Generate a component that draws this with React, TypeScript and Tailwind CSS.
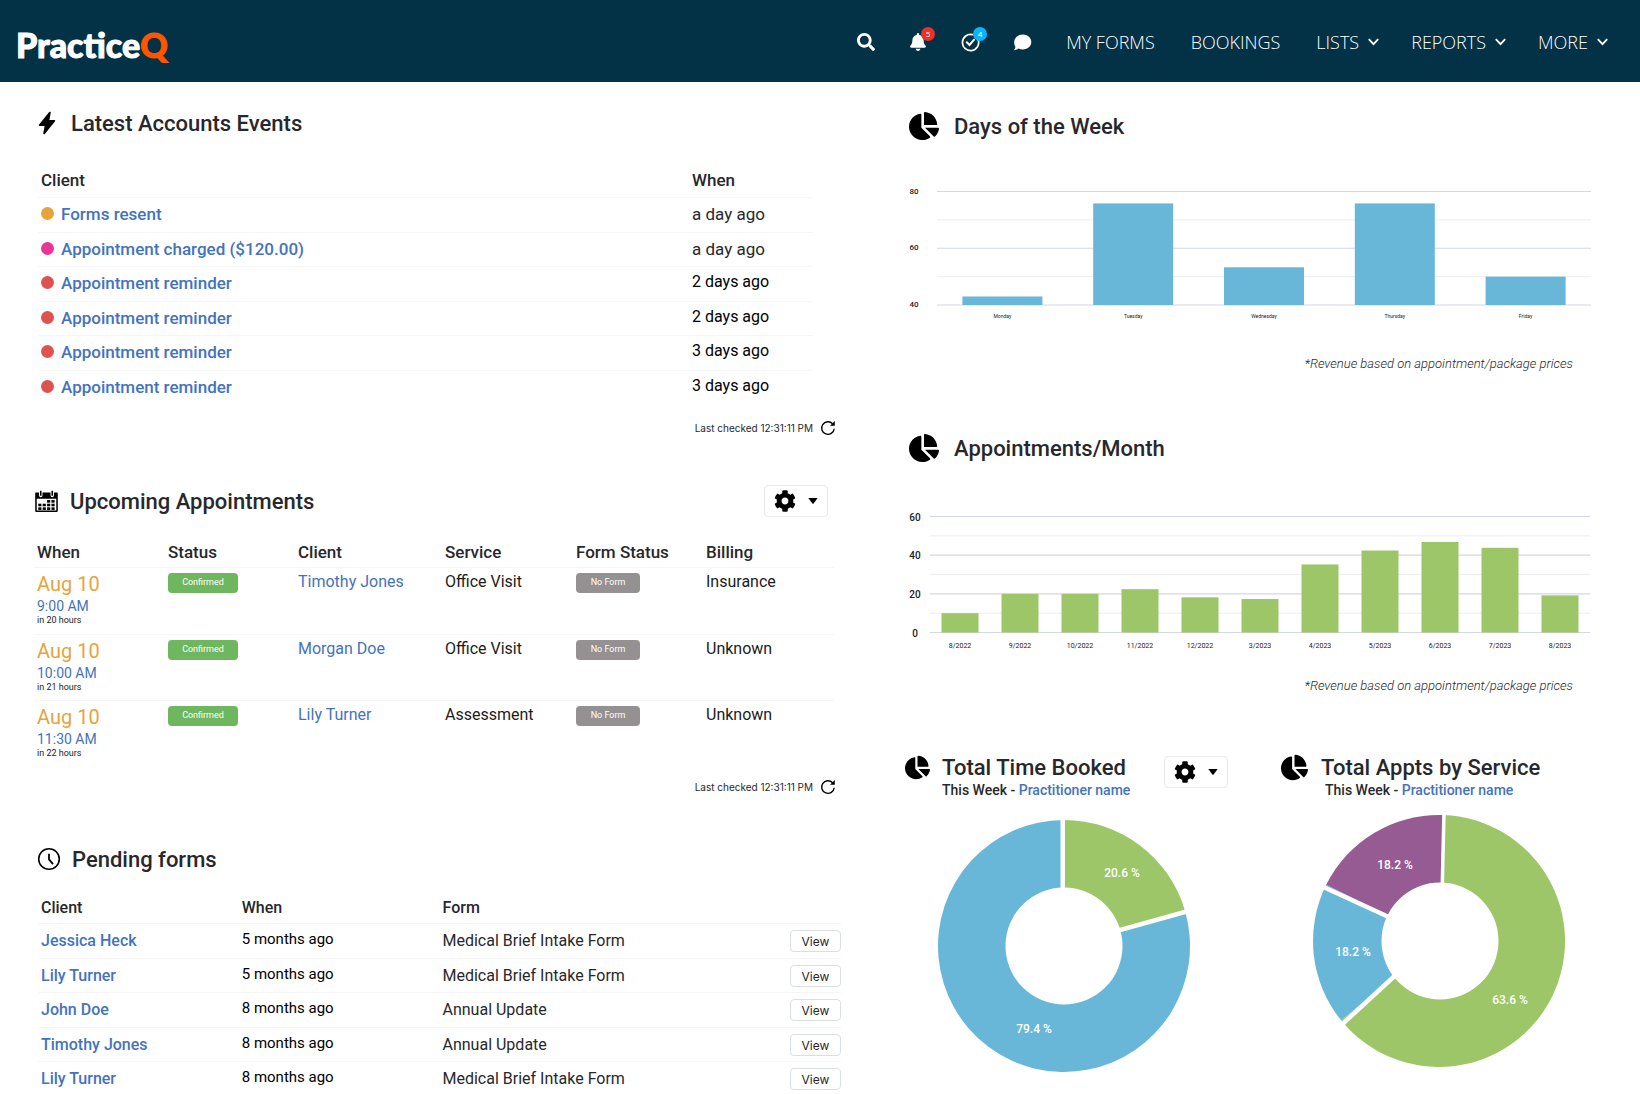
import type { ReactNode } from 'react'
import { FaBell, FaChartPie, FaCog, FaSearch } from 'react-icons/fa'
import { IoFlash } from 'react-icons/io5'

const BLUE = '#69b7d8'
const GREEN = '#9dc668'
const PURPLE = '#955b92'

const EVENTS = [
  { dot: 'bg-[#e8a33c]', label: 'Forms resent', when: 'a day ago' },
  { dot: 'bg-[#ea3499]', label: 'Appointment charged ($120.00)', when: 'a day ago' },
  { dot: 'bg-[#e0524f]', label: 'Appointment reminder', when: '2 days ago' },
  { dot: 'bg-[#e0524f]', label: 'Appointment reminder', when: '2 days ago' },
  { dot: 'bg-[#e0524f]', label: 'Appointment reminder', when: '3 days ago' },
  { dot: 'bg-[#e0524f]', label: 'Appointment reminder', when: '3 days ago' },
]

const APPOINTMENTS = [
  { date: 'Aug 10', time: '9:00 AM', eta: 'in 20 hours', client: 'Timothy Jones', service: 'Office Visit', billing: 'Insurance' },
  { date: 'Aug 10', time: '10:00 AM', eta: 'in 21 hours', client: 'Morgan Doe', service: 'Office Visit', billing: 'Unknown' },
  { date: 'Aug 10', time: '11:30 AM', eta: 'in 22 hours', client: 'Lily Turner', service: 'Assessment', billing: 'Unknown' },
]

const PENDING = [
  { client: 'Jessica Heck', when: '5 months ago', form: 'Medical Brief Intake Form' },
  { client: 'Lily Turner', when: '5 months ago', form: 'Medical Brief Intake Form' },
  { client: 'John Doe', when: '8 months ago', form: 'Annual Update' },
  { client: 'Timothy Jones', when: '8 months ago', form: 'Annual Update' },
  { client: 'Lily Turner', when: '8 months ago', form: 'Medical Brief Intake Form' },
]

const DAYS = [
  { label: 'Monday', value: 43 },
  { label: 'Tuesday', value: 75.8 },
  { label: 'Wednesday', value: 53.3 },
  { label: 'Thursday', value: 75.8 },
  { label: 'Friday', value: 50 },
]

const MONTHS = [
  { label: '8/2022', value: 10 },
  { label: '9/2022', value: 20 },
  { label: '10/2022', value: 20 },
  { label: '11/2022', value: 22.4 },
  { label: '12/2022', value: 18.2 },
  { label: '3/2023', value: 17.3 },
  { label: '4/2023', value: 35.2 },
  { label: '5/2023', value: 42.4 },
  { label: '6/2023', value: 46.8 },
  { label: '7/2023', value: 43.8 },
  { label: '8/2023', value: 19.2 },
]

//// icons
const Chevron = () => (
  <svg width="11" height="8" viewBox="0 0 11 8" fill="none" stroke="white" strokeWidth="1.8">
    <path d="M.8 1.2 5.5 6.2 10.2 1.2" />
  </svg>
)

const CheckIcon = () => (
  <svg width="19" height="19" viewBox="0 0 19 19" fill="none" stroke="white" strokeWidth="1.7" strokeLinecap="round">
    <path d="M17.3 7.2A8.100 8.100 0 1 1 11.500 1.700" />
    <path d="m5.800 9.300 2.700 2.700 4.600-5.300" strokeWidth="2" />
  </svg>
)

const ChatIcon = () => (
  <svg width="19" height="17" viewBox="0 0 19 17" fill="white">
    <path d="M9.8 0.5C14.6 0.5 18.3 3.8 18.3 8s-3.7 7.4-8.5 7.4c-1.5 0-2.900-.3-4.100-.9C4.500 15.500 2.700 16.100.7 16.200c1-1 1.600-2.200 1.700-3.500A7.100 7.100 0 0 1 1.200 8C1.200 3.800 5 .5 9.800.5Z" />
  </svg>
)

const CalendarIcon = () => (
  <svg width="23" height="23" viewBox="0 0 24 23" className="ml-px">
    <path fillRule="evenodd" d="M1 2h22a.8.8 0 0 1 .8.8v18.400a1.300 1.300 0 0 1-1.300 1.300H1.500A1.300 1.300 0 0 1 .2 21.200V2.800A.8.8 0 0 1 1 2Zm.8 6.500V21h20.400V8.500Z" />
    <path d="M4.200 0h3.600v5.200a1.800 1.800 0 0 1-3.600 0ZM16.200 0h3.600v5.200a1.800 1.800 0 0 1-3.600 0Z" fill="white" />
    <path d="M5.200.3h1.600v5.200H5.200ZM17.200.3h1.600v5.200h-1.600Z" />
    {[10, 13.8, 17.6].map((y, r) =>
      [3.4, 8, 12.6, 17.2].map((x, c) =>
        r === 0 && c < 2 ? null : <rect key={`${x}-${y}`} x={x} y={y} width="3.300" height="2.700" />
      )
    )}
  </svg>
)

const ClockIcon = () => (
  <svg width="24" height="24" viewBox="0 0 24 24" fill="none" stroke="black" strokeWidth="1.600" className="ml-px">
    <circle cx="12" cy="12" r="10.300" />
    <path d="M12 6.800V12.400L16 17.200" strokeWidth="1.800" />
  </svg>
)

const RefreshIcon = () => (
  <svg width="16" height="16" viewBox="0 0 16 16" fill="none" stroke="black" strokeWidth="1.400">
    <path d="M14.200 8.700A6.300 6.300 0 1 1 12.600 3.800" />
    <path d="M14.800 1V5.800H10Z" fill="black" stroke="none" />
  </svg>
)

//// shared bits
const NavIcon = ({ label, badge, badgeColor, children }: { label: string; badge?: string; badgeColor?: string; children: ReactNode }) => (
  <button type="button" aria-label={label} className="relative flex h-5 w-5 items-center justify-center text-white">
    {children}
    {badge && (
      <span className={`absolute -top-[5px] left-[13px] flex h-3.5 w-3.5 items-center justify-center rounded-full text-[8px] ${badgeColor}`}>
        {badge}
      </span>
    )}
  </button>
)

const NavLink = ({ label, menu }: { label: string; menu?: boolean }) => (
  <a href="#" className="flex items-center gap-[9px] text-lg font-light text-white">
    {label}
    {menu && <Chevron />}
  </a>
)

const Heading = ({ icon, title, iconWidth = 'w-9', children }: { icon: ReactNode; title: string; iconWidth?: string; children?: ReactNode }) => (
  <div className="flex h-8 items-center">
    <span className={`flex shrink-0 items-center text-black ${iconWidth}`}>{icon}</span>
    <h2 className="text-[22px] font-medium">{title}</h2>
    {children}
  </div>
)

const SettingsButton = () => (
  <button type="button" aria-label="Settings" className="flex h-8 w-16 items-center justify-between rounded border border-[#e9e9eb] px-[9px] text-black">
    <FaCog size={22} />
    <svg width="10" height="6" viewBox="0 0 10 6"><path d="M.3 0h9.400L5.600 5.500a.8.8 0 0 1-1.200 0Z" /></svg>
  </button>
)

const LastChecked = () => (
  <div className="flex h-4 items-center justify-end gap-[7px] font-[Inter,sans-serif] text-[10px]">
    Last checked 12:31:11 PM
    <button type="button" aria-label="Refresh"><RefreshIcon /></button>
  </div>
)

const Footnote = () => (
  <p className="pr-[19px] text-right text-[13px] leading-4 font-light italic">
    *Revenue based on appointment/package prices
  </p>
)

//// charts
type Bar = { label: string; value: number }
type BarChartProps = {
  bars: Bar[]
  color: string
  height: number
  left: number
  right: number
  top: number
  bottom: number
  min: number
  max: number
  barWidth: number
  tickSize: number
  tickX: number
  tickDy: number
  labelSize: number
  labelY: number
  title: string
}

const BarChart = ({ bars, color, height, left, right, top, bottom, min, max, barWidth, tickSize, tickX, tickDy, labelSize, labelY, title }: BarChartProps) => {
  const y = (v: number) => bottom - ((v - min) / (max - min)) * (bottom - top)
  const step = (right - left) / bars.length
  const ticks = []
  for (let v = min; v <= max; v += 10) ticks.push(v)

  return (
    <svg viewBox={`0 0 687 ${height}`} className="block w-full" role="img" aria-label={title}>
      {ticks.map((v) => {
        const major = v % 20 === 0
        return (
          <g key={v}>
            <line x1={left} x2={right} y1={y(v)} y2={y(v)} stroke={major ? '#d3d8e2' : '#ededf0'} strokeWidth={major ? 1.2 : 1} />
            {major && (
              <text x={tickX} y={y(v) + tickDy} fontSize={tickSize} fontWeight="500" textAnchor="middle" fill="#202124">{v}</text>
            )}
          </g>
        )
      })}
      {bars.map((b, i) => {
        const cx = left + step * (i + 0.5)
        return (
          <g key={b.label}>
            <rect x={cx - barWidth / 2} y={y(b.value)} width={barWidth} height={bottom - y(b.value)} fill={color} />
            <text x={cx} y={labelY} fontSize={labelSize} textAnchor="middle" fill="#202124">{b.label}</text>
          </g>
        )
      })}
    </svg>
  )
}

type Slice = { value: number; color: string; x: number; y: number }

// gaps are the white lines between two slices
const Donut = ({ slices, gaps, start, holeX, title }: { slices: Slice[]; gaps: number[][]; start: number; holeX: number; title: string }) => {
  const point = (pct: number) => {
    const a = ((pct / 100) * 360 + start - 90) * (Math.PI / 180)
    return `${130 + 126 * Math.cos(a)} ${130 + 126 * Math.sin(a)}`
  }
  let acc = 0

  return (
    <svg viewBox="0 0 260 260" className="block w-[260px]" role="img" aria-label={title}>
      {slices.map((s, i) => {
        const from = acc
        acc += s.value
        return <path key={i} fill={s.color} d={`M130 130 L${point(from)} A126 126 0 ${s.value > 50 ? 1 : 0} 1 ${point(acc)} Z`} />
      })}
      {gaps.map(([x1, y1, x2, y2, w], i) => (
        <line key={i} x1={x1} y1={y1} x2={x2} y2={y2} stroke="white" strokeWidth={w} />
      ))}
      <circle cx={holeX} cy="130" r="58.500" fill="white" />
      {slices.map((s, i) => (
        <text key={i} x={s.x} y={s.y} fontSize="12" fontWeight="500" textAnchor="middle" fill="white">{s.value.toFixed(1)} %</text>
      ))}
    </svg>
  )
}

const Subtitle = () => (
  <p className="text-sm leading-4 font-medium">
    This Week - <a href="#" className="text-[#4473bd]">Practitioner name</a>
  </p>
)

const th = 'px-[3px] text-left font-medium'
const line = 'border-b border-[#f6f6f8]'

const Header = () => (
  <header className="flex h-[82px] items-center justify-between bg-[#033146] pr-8 pl-4 font-['Open_Sans',sans-serif]">
    <a href="#" className="pt-2 font-[Lato,sans-serif] text-[34px] leading-10 font-black text-white [-webkit-text-stroke:1px_currentcolor]">
      Practice<span className="text-[#ff5500]">Q</span>
    </a>
    <nav className="flex items-center gap-9 pt-0.5">
      <div className="-mr-0.5 flex items-center gap-8">
        <NavIcon label="Search"><FaSearch size={18} /></NavIcon>
        <NavIcon label="Notifications" badge="5" badgeColor="bg-[#ee3124]"><FaBell size={18} /></NavIcon>
        <NavIcon label="Tasks" badge="4" badgeColor="bg-[#0ab4ff]"><CheckIcon /></NavIcon>
        <NavIcon label="Messages"><ChatIcon /></NavIcon>
      </div>
      <NavLink label="MY FORMS" />
      <NavLink label="BOOKINGS" />
      <div className="flex items-center gap-8">
        <NavLink label="LISTS" menu />
        <NavLink label="REPORTS" menu />
        <NavLink label="MORE" menu />
      </div>
    </nav>
  </header>
)

const LatestEvents = () => (
  <section>
    <div className="pl-[35px]">
      <Heading icon={<IoFlash size={24} />} title="Latest Accounts Events" />
    </div>
    <div className="mt-[22px] pr-[89px] pl-[38px]">
      <table className="w-full table-fixed">
        <thead>
          <tr className={`h-9 text-[17px] ${line}`}>
            <th className={`w-[84%] pt-1 ${th}`}>Client</th>
            <th className={`pt-1 ${th}`}>When</th>
          </tr>
        </thead>
        <tbody>
          {EVENTS.map((e, i) => (
            <tr key={i} className="h-[34px] border-b border-[#f6f6f8] align-top last:border-b-0 odd:h-[35px]">
              <td className="px-[3px] pt-1.5">
                <div className="flex items-center gap-[7px]">
                  <span className={`h-[13px] w-[13px] rounded-full ${e.dot}`} />
                  <a href="#" className="text-[17px] leading-5 font-medium text-[#4473bd]">{e.label}</a>
                </div>
              </td>
              <td className={e.when === 'a day ago' ? 'px-[3px] pt-1.5 text-[17px] leading-5' : 'px-[3px] pt-[5px] text-base leading-5 text-black'}>
                {e.when}
              </td>
            </tr>
          ))}
        </tbody>
      </table>
    </div>
    <div className="mt-4 pr-[66px]"><LastChecked /></div>
  </section>
)

const Upcoming = () => (
  <section className="mt-[49px]">
    <div className="pl-[34px]">
      <Heading icon={<CalendarIcon />} title="Upcoming Appointments">
        <div className="ml-auto pr-[74px]"><SettingsButton /></div>
      </Heading>
    </div>
    <div className="mt-5 pr-[68px] pl-[34px]">
      <table className="w-full table-fixed">
        <thead>
          <tr className={`h-[30px] text-[17px] ${line}`}>
            <th className={`w-[131px] pt-0.5 ${th}`}>When</th>
            <th className={`w-[130px] pt-0.5 ${th}`}>Status</th>
            <th className={`w-[147px] pt-0.5 ${th}`}>Client</th>
            <th className={`w-[131px] pt-0.5 ${th}`}>Service</th>
            <th className={`w-[130px] pt-0.5 ${th}`}>Form Status</th>
            <th className={`pt-0.5 ${th}`}>Billing</th>
          </tr>
        </thead>
        <tbody className="text-[#1c1c20]">
          {APPOINTMENTS.map((a) => (
            <tr key={a.time} className="h-[66px] border-b border-[#f6f6f8] align-top first:h-[67px] last:border-b-0">
              <td className="px-[3px] pt-1">
                <div className="text-xl leading-6 text-[#e8a33c]">{a.date}</div>
                <div className="text-sm leading-5 text-[#4473bd]">{a.time}</div>
                <div className="text-[9px] leading-2">{a.eta}</div>
              </td>
              <td className="px-[3px] pt-[5px]">
                <span className="flex h-5 w-[70px] items-center justify-center rounded bg-[#6fb75f] text-[9px] text-white">Confirmed</span>
              </td>
              <td className="px-[3px] pt-1"><a href="#" className="block text-base leading-5 text-[#4473bd]">{a.client}</a></td>
              <td className="px-[3px] pt-1 text-base leading-5">{a.service}</td>
              <td className="px-[3px] pt-[5px]">
                <span className="flex h-5 w-16 items-center justify-center rounded bg-[#959192] text-[9px] text-white">No Form</span>
              </td>
              <td className="px-[3px] pt-1 text-base leading-5">{a.billing}</td>
            </tr>
          ))}
        </tbody>
      </table>
    </div>
    <div className="mt-[13px] pr-[66px]"><LastChecked /></div>
  </section>
)

const PendingForms = () => (
  <section className="mt-12">
    <div className="pl-9">
      <Heading icon={<ClockIcon />} title="Pending forms" />
    </div>
    <div className="mt-[15px] pr-[61px] pl-[38px]">
      <table className="w-full table-fixed">
        <thead>
          <tr className={`h-[33px] text-base ${line}`}>
            <th className={`w-1/4 pt-1 ${th}`}>Client</th>
            <th className={`w-1/4 pt-1 ${th}`}>When</th>
            <th className={`pt-1 ${th}`}>Form</th>
            <th aria-label="Action" className="w-[60px]" />
          </tr>
        </thead>
        <tbody>
          {PENDING.map((p, i) => (
            <tr key={i} className="border-b border-[#f6f6f8] align-top last:border-b-0 odd:h-[35px]">
              <td className="px-[3px] pt-[5px]"><a href="#" className="block text-base leading-6 font-medium text-[#4473bd]">{p.client}</a></td>
              <td className="px-[3px] pt-[3px] text-[15px] leading-6 text-black">{p.when}</td>
              <td className="px-[3px] pt-[5px] text-base leading-6">{p.form}</td>
              <td className="pt-1.5 pb-[5px]">
                <button type="button" className="ml-auto block h-[22px] w-[51px] rounded border border-[#dadfe6] font-[Inter,sans-serif] text-xs leading-[22px]">View</button>
              </td>
            </tr>
          ))}
        </tbody>
      </table>
    </div>
  </section>
)

const App = () => {
  return (
    <div className="min-h-screen bg-white font-[Roboto,sans-serif] text-[#27282c]">
      <Header />
      <main className="grid grid-cols-[11fr_9fr]">
        <div className="pt-[25px]">
          <LatestEvents />
          <Upcoming />
          <PendingForms />
        </div>

        <div className="pt-7 pr-12 pl-[3px]">
          <section>
            <Heading icon={<FaChartPie size={30} className="ml-1" />} iconWidth="w-[49px]" title="Days of the Week" />
            <div className="mt-[38px]">
              <BarChart
                title="Days of the Week" bars={DAYS} color={BLUE} height={145} left={32} right={686}
                top={11.5} bottom={125} min={40} max={80} barWidth={80} tickSize={8} tickX={9} tickDy={2} labelSize={5} labelY={138}
              />
            </div>
            <div className="mt-[31px]"><Footnote /></div>
          </section>

          <section className="mt-[60px]">
            <Heading icon={<FaChartPie size={30} className="ml-1" />} iconWidth="w-[49px]" title="Appointments/Month" />
            <div className="mt-[41px]">
              <BarChart
                title="Appointments per month" bars={MONTHS} color={GREEN} height={150} left={25} right={685}
                top={11.5} bottom={127.5} min={0} max={60} barWidth={37} tickSize={10} tickX={10} tickDy={4} labelSize={7} labelY={143}
              />
            </div>
            <div className="mt-[23px]"><Footnote /></div>
          </section>

          <div className="mt-[57px] grid grid-cols-[376fr_311fr]">
            <section>
              <Heading icon={<FaChartPie size={25} />} iconWidth="w-[37px]" title="Total Time Booked">
                <div className="ml-auto pt-2.5 pr-[53px]"><SettingsButton /></div>
              </Heading>
              <div className="-mt-px pl-[37px]"><Subtitle /></div>
              <div className="mt-[18px] pl-[29px]">
                <Donut
                  title="Total Time Booked" start={0} holeX={130}
                  slices={[
                    { value: 20.6, color: GREEN, x: 188, y: 61 },
                    { value: 79.4, color: BLUE, x: 100, y: 217 },
                  ]}
                  gaps={[[128.7, 130, 128.7, 0, 4.5], [130, 129.7, 258, 94, 4.5]]}
                />
              </div>
            </section>
            <section>
              <Heading icon={<FaChartPie size={27} />} iconWidth="w-10" title="Total Appts by Service" />
              <div className="-mt-px pl-11"><Subtitle /></div>
              <div className="mt-[13px] pl-[28px]">
                <Donut
                  title="Total Appts by Service" start={2} holeX={131}
                  slices={[
                    { value: 63.6, color: GREEN, x: 201, y: 193 },
                    { value: 18.2, color: BLUE, x: 44, y: 145 },
                    { value: 18.2, color: PURPLE, x: 86, y: 58 },
                  ]}
                  gaps={[[132, 130, 135, 0, 3.5], [130, 129, 10, 74, 4.5], [130, 124, 27, 219, 4.5]]}
                />
              </div>
            </section>
          </div>
        </div>
      </main>
    </div>
  )
}

export default App
